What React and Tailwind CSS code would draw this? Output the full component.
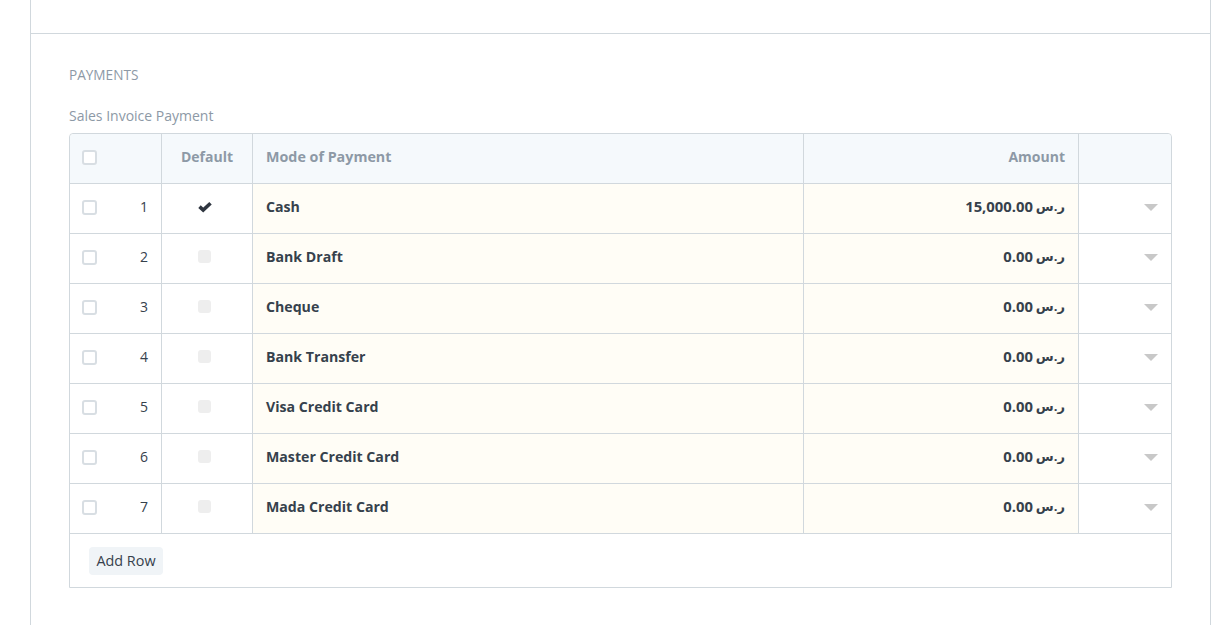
const rows = [
  { id: 1, name: 'Cash', amount: '15,000.00', isDefault: true },
  { id: 2, name: 'Bank Draft', amount: '0.00' },
  { id: 3, name: 'Cheque', amount: '0.00' },
  { id: 4, name: 'Bank Transfer', amount: '0.00' },
  { id: 5, name: 'Visa Credit Card', amount: '0.00' },
  { id: 6, name: 'Master Credit Card', amount: '0.00' },
  { id: 7, name: 'Mada Credit Card', amount: '0.00' },
];

function Checkbox() {
  return <div className="w-[15px] h-[15px] rounded-[3px] border-2 border-[#d8dee3] bg-white" />;
}

function Check() {
  return (
    <svg width="14" height="12" viewBox="0 0 14 12" className="ml-[2px] text-[#2f3640]">
      <path d="M1.5 5.6 L5.2 9 L12.5 2.2" fill="none" stroke="currentColor" strokeWidth="3.6" />
    </svg>
  );
}

export default function App() {
  const grid = 'grid grid-cols-[92px_91px_551px_275px_1fr]';

  return (
    <div className="h-[625px] overflow-hidden bg-white text-[14px] font-['Open_Sans','DejaVu_Sans',sans-serif]">
      <div className="ml-[30px] mr-[3px] h-full border-x border-[#d1d8dd]">
        <div className="h-[34px] border-b border-[#d1d8dd]" />
        <div className="pl-[38px] pr-[38px] pt-[32px]">
          <h4 className="text-[13.6px] leading-[18px] text-[#8d99a6]">PAYMENTS</h4>
          <div className="mt-[23px] h-[18px] text-[14px] leading-[18px] text-[#8d99a6]">Sales Invoice Payment</div>
          <div className="mt-[8px] rounded-t-[4px] border border-[#d1d8dd]">
            <div className={`${grid} h-[49px] rounded-t-[4px] bg-[#f5f9fc] font-bold text-[#8d99a6]`}>
              <div className="flex items-center pl-[12px] pb-[2px] border-r border-[#d1d8dd]">
                <Checkbox />
              </div>
              <div className="flex items-center justify-center pb-[5px] border-r border-[#d1d8dd]">Default</div>
              <div className="flex items-center pl-[13px] pb-[3px] text-[14.3px] border-r border-[#d1d8dd]">Mode of Payment</div>
              <div className="flex items-center justify-end pr-[13px] pb-[5px] border-r border-[#d1d8dd]">Amount</div>
              <div />
            </div>
            {rows.map((row) => (
              <div key={row.id} className={`${grid} h-[50px] border-t border-[#d1d8dd] font-bold text-[#36414c]`}>
                <div className="flex items-center justify-between pl-[12px] pr-[13px] border-r border-[#d1d8dd]">
                  <div className="pb-[2px]">
                    <Checkbox />
                  </div>
                  <span className="pb-[4px] font-normal text-[#36414c]">{row.id}</span>
                </div>
                <div className="flex items-center justify-center pr-[6px] pb-[4px] border-r border-[#d1d8dd]">
                  {row.isDefault ? <Check /> : <div className="w-[13px] h-[13px] rounded-[3px] bg-[#eeeeee]" />}
                </div>
                <div className="flex items-center pl-[13px] pb-[4px] text-[14.15px] bg-[#fffdf6] border-r border-[#d1d8dd]">{row.name}</div>
                <div className="flex items-center justify-end gap-[3px] pr-[13px] pb-[4px] bg-[#fffdf6] border-r border-[#d1d8dd]">
                  <span className="text-[14.8px]">{row.amount}</span>
                  <span className="text-[13px]">ر.س</span>
                </div>
                <div className="flex items-center justify-end pr-[13px] pb-[2px]">
                  <div className="w-0 h-0 border-x-[7px] border-x-transparent border-t-[7px] border-t-[#c8c8c8]" />
                </div>
              </div>
            ))}
            <div className="h-[54px] border-t border-[#d1d8dd] flex items-center pl-[19px]">
              <button className="h-[28px] w-[74px] rounded-[4px] bg-[#f0f4f7] text-[14.4px] text-[#36414c]">Add Row</button>
            </div>
          </div>
        </div>
      </div>
    </div>
  );
}
